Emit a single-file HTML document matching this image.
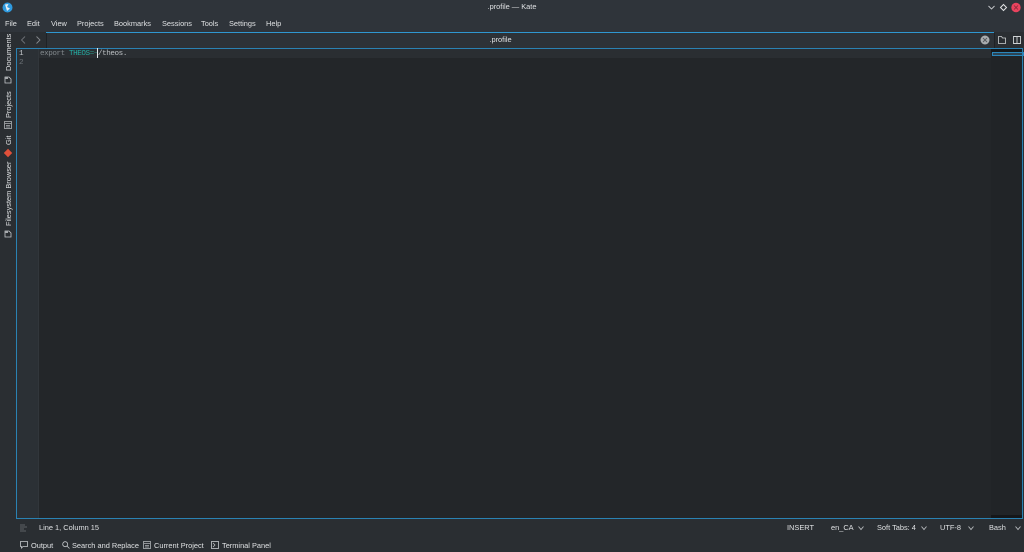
<!DOCTYPE html>
<html><head><meta charset="utf-8"><style>
html,body{margin:0;padding:0;width:1024px;height:552px;overflow:hidden;background:#2a2e32}
.t{position:absolute;font-family:"Liberation Sans","DejaVu Sans",sans-serif;font-size:7.4px;color:#dfe1e3;white-space:nowrap;line-height:10px}
.b{position:absolute}
.m{font-family:"Liberation Mono",monospace;font-size:7.6px;letter-spacing:-.42px}
.v{position:absolute;transform-origin:0 0;transform:rotate(-90deg);font-family:"Liberation Sans",sans-serif;font-size:7.4px;color:#dfe1e3;white-space:nowrap;line-height:10px}
svg{position:absolute;overflow:visible}
</style></head><body>
<div class="b" style="left:0;top:0;width:1024px;height:32px;background:#2f343a"></div>
<div class="t" style="left:0;top:2px;width:1024px;text-align:center;font-size:7.4px">.profile — Kate</div>
<svg style="left:1.500px;top:1.500px" width="11" height="11" viewBox="0 0 11 11"><circle cx="5.500" cy="5.500" r="5" fill="#2f9be0"/><path d="M3 2.500L6.500 2L5 5L8 6.500L5 9Z" fill="#e8eef2"/></svg>
<div class="t" style="left:5px;top:19px">File</div>
<div class="t" style="left:27px;top:19px">Edit</div>
<div class="t" style="left:51px;top:19px">View</div>
<div class="t" style="left:77px;top:19px">Projects</div>
<div class="t" style="left:114px;top:19px">Bookmarks</div>
<div class="t" style="left:162px;top:19px">Sessions</div>
<div class="t" style="left:201px;top:19px">Tools</div>
<div class="t" style="left:229px;top:19px">Settings</div>
<div class="t" style="left:266px;top:19px">Help</div>
<svg style="left:987px;top:2px" width="34" height="11" viewBox="0 0 34 11"><path d="M1.500 4L4.500 7L7.500 4" fill="none" stroke="#c8cbce" stroke-width=".9"/><path d="M16.500 2.500L19.500 5.500L16.500 8.500L13.500 5.500Z" fill="none" stroke="#e2e4e6" stroke-width="1"/><circle cx="29" cy="5.500" r="4.700" fill="#e9435e"/><path d="M27 3.500L31 7.500M31 3.500L27 7.500" stroke="#8a2a3a" stroke-width=".8"/></svg>
<!-- tab bar -->
<div class="b" style="left:16px;top:32px;width:1008px;height:16px;background:#2a2e32"></div>
<div class="b" style="left:46px;top:32px;width:948px;height:1px;background:#2f97d0"></div>
<div class="b" style="left:46px;top:33px;width:948px;height:15px;background:#2d3237"></div>
<div class="b" style="left:46px;top:33px;width:1px;height:15px;background:#1f2225"></div>
<div class="b" style="left:994px;top:33px;width:1px;height:15px;background:#1f2225"></div>
<div class="t" style="left:46px;top:35px;width:909px;text-align:center">.profile</div>
<svg style="left:20px;top:35px" width="24" height="10" viewBox="0 0 24 10"><path d="M5 1.500L1.500 5L5 8.500" fill="none" stroke="#6d7176" stroke-width=".9"/><path d="M16.500 1.500L20 5L16.500 8.500" fill="none" stroke="#85898d" stroke-width=".9"/></svg>
<svg style="left:980px;top:35px" width="10" height="10" viewBox="0 0 10 10"><circle cx="5" cy="5" r="4.500" fill="#a9acae"/><path d="M3 3L7 7M7 3L3 7" stroke="#55595d" stroke-width=".9"/></svg>
<svg style="left:998px;top:35px" width="24" height="10" viewBox="0 0 24 10"><path d="M.5 1.500H3.500L4.500 3H7.500V8.500H.5Z" fill="none" stroke="#cfd2d4" stroke-width=".8"/><path d="M15.500 1.500H22.500V8.500H15.500ZM19 1.500V8.500" fill="none" stroke="#cfd2d4" stroke-width=".9"/></svg>
<!-- sidebar -->
<div class="v" style="left:4px;top:71px">Documents</div>
<svg style="left:4px;top:76px" width="8" height="8" viewBox="0 0 8 8"><path d="M1 1H5L7 3V7H1Z" fill="none" stroke="#c6c9cc" stroke-width=".8"/><path d="M1 1H4V3H1Z" fill="#a8abae"/></svg>
<div class="v" style="left:4px;top:118px">Projects</div>
<svg style="left:4px;top:121px" width="8" height="8" viewBox="0 0 8 8"><rect x=".5" y=".5" width="7" height="7" fill="none" stroke="#b0b3b6" stroke-width=".8"/><path d="M1 2.500H7M2 4.500H6M2 6H6" stroke="#b0b3b6" stroke-width=".7"/></svg>
<div class="v" style="left:4px;top:145px">Git</div>
<svg style="left:3px;top:148px" width="10" height="10" viewBox="0 0 10 10"><path d="M5 .8L9.200 5L5 9.200L.8 5Z" fill="#e0503a"/></svg>
<div class="v" style="left:4px;top:226px">Filesystem Browser</div>
<svg style="left:4px;top:230px" width="8" height="8" viewBox="0 0 8 8"><path d="M1 1H5L7 3V7H1Z" fill="none" stroke="#c6c9cc" stroke-width=".8"/><path d="M1 1H4V3H1Z" fill="#a8abae"/></svg>
<!-- editor -->
<div class="b" style="left:16px;top:48px;width:1007px;height:471px;background:#232629"></div>
<div class="b" style="left:17px;top:49px;width:21px;height:469px;background:#2b3035"></div>
<div class="b" style="left:38px;top:49px;width:1px;height:469px;background:#31363b"></div>
<div class="b" style="left:39px;top:49px;width:953px;height:9px;background:#2a2e32"></div>
<div class="b" style="left:991px;top:49px;width:32px;height:469px;background:#212427"></div>
<div class="b" style="left:991px;top:49px;width:32px;height:4px;background:#16181a"></div>
<div class="b" style="left:992px;top:52px;width:30px;height:2px;border:1px solid #2a86bb;background:#2c4454"></div>
<div class="b" style="left:991px;top:515px;width:32px;height:3px;background:#15171a"></div>
<div class="b" style="left:16px;top:48px;width:1005px;height:469px;border:1px solid #2a82b3"></div>
<div class="t m" style="left:19px;top:48.500px;color:#c4c7ca">1</div>
<div class="t m" style="left:19px;top:57.500px;color:#6d7378">2</div>
<div class="t m" style="left:40px;top:48.500px;color:#83898d">export</div>
<div class="t m" style="left:69px;top:48.500px;color:#24ada3">THEOS</div>
<div class="t m" style="left:89.700px;top:48.500px;color:#2f8a7c">=~</div>
<div class="t m" style="left:98px;top:48.500px;color:#bcc0c3">/theos.</div>
<div class="b" style="left:97px;top:48px;width:1px;height:10px;background:#e8eaec"></div>
<!-- status -->
<svg style="left:20px;top:524px" width="8" height="9" viewBox="0 0 8 9"><path d="M0 1H5M0 3H7M0 5H4M0 7H6" stroke="#5d6266" stroke-width="1"/></svg>
<div class="t" style="left:39px;top:523px">Line 1, Column 15</div>
<div class="t" style="left:787px;top:523px">INSERT</div>
<div class="t" style="left:831px;top:523px">en_CA</div>
<div class="t" style="left:877px;top:523px">Soft Tabs: 4</div>
<div class="t" style="left:940px;top:523px">UTF-8</div>
<div class="t" style="left:989px;top:523px">Bash</div>
<svg style="left:858px;top:526px" width="166" height="5" viewBox="0 0 166 5"><g fill="none" stroke="#b8bbbe" stroke-width=".9"><path d="M.5 .5L3 3.500L5.500 .5"/><path d="M63.500 .5L66 3.500L68.500 .5"/><path d="M110.500 .5L113 3.500L115.500 .5"/><path d="M157.500 .5L160 3.500L162.500 .5"/></g></svg>
<!-- bottom tabs -->
<svg style="left:20px;top:541px" width="8" height="8" viewBox="0 0 8 8"><path d="M.5 .5H7.500V5.500H3L1.500 7V5.500H.5Z" fill="none" stroke="#c6c9cc" stroke-width=".8"/></svg>
<div class="t" style="left:31px;top:541px">Output</div>
<svg style="left:62px;top:541px" width="8" height="8" viewBox="0 0 8 8"><circle cx="3.200" cy="3.200" r="2.500" fill="none" stroke="#c6c9cc" stroke-width=".8"/><path d="M5 5L7.500 7.500" stroke="#c6c9cc" stroke-width=".8"/></svg>
<div class="t" style="left:72px;top:541px">Search and Replace</div>
<svg style="left:143px;top:541px" width="8" height="8" viewBox="0 0 8 8"><rect x=".5" y=".5" width="7" height="7" fill="none" stroke="#b0b3b6" stroke-width=".8"/><path d="M1 2.500H7M2 4.500H6M2 6H6" stroke="#b0b3b6" stroke-width=".7"/></svg>
<div class="t" style="left:154px;top:541px">Current Project</div>
<svg style="left:211px;top:541px" width="8" height="8" viewBox="0 0 8 8"><rect x=".5" y=".5" width="7" height="7" fill="none" stroke="#c6c9cc" stroke-width=".8"/><path d="M2 2L4 4L2 6" fill="none" stroke="#c6c9cc" stroke-width=".7"/></svg>
<div class="t" style="left:222px;top:541px">Terminal Panel</div>
</body></html>
